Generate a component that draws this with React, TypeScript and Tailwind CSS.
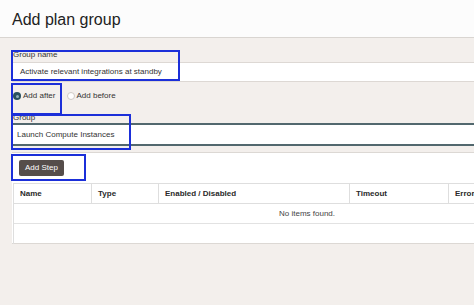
import React from 'react';

const font = { fontFamily: '"Liberation Sans", Arial, sans-serif' };

const columns = [
  { label: 'Name', width: 'w-[78px]' },
  { label: 'Type', width: 'w-[67px]' },
  { label: 'Enabled / Disabled', width: 'w-[191px]' },
  { label: 'Timeout', width: 'w-[99px]' },
  { label: 'Errors', width: 'w-[152px]' },
];

export default function App() {
  return (
    <div
      className="relative w-[474px] h-[305px] overflow-hidden bg-[#f3efec] text-[#2e2e2e]"
      style={font}
    >
      {/* Header */}
      <div className="h-[38px] bg-[#fcfcfc] border-b border-[#d9d5d1] pl-[12px] pt-[10px]">
        <h1 className="text-[16px] leading-[20px] font-normal text-[#222]">Add plan group</h1>
      </div>

      {/* Form */}
      <div className="pl-[12px]">
        <div className="mt-[12px] pl-[1px] text-[8px] leading-[10px] text-[#333]">Group name</div>
        <div className="mt-[2px] h-[20px] bg-white border-y border-l border-[#ddd8d4] pl-[7px] flex items-center text-[8px] text-[#333]">
          Activate relevant integrations at standby
        </div>

        <div className="mt-[8px] h-[12px] flex items-center text-[8px] text-[#333]">
          <div className="ml-[1px] w-[8px] h-[8px] rounded-full bg-[#27505f] flex items-center justify-center">
            <div className="w-[3px] h-[3px] rounded-full bg-[#8fb0bb]" />
          </div>
          <span className="ml-[2px]">Add after</span>
          <div className="ml-[12px] w-[8px] h-[8px] rounded-full bg-white border border-[#cfcac6]" />
          <span className="ml-[1px]">Add before</span>
        </div>

        <div className="mt-[11px] pl-[1px] text-[8px] leading-[10px] text-[#333]">Group</div>
        <div className="h-[23px] bg-white border-y-2 border-[#52686e] pl-[5px] flex items-center text-[8px] text-[#333]">
          Launch Compute Instances
        </div>

        {/* Steps panel */}
        <div className="mt-[6px] h-[92px] bg-white border-y border-[#dcd8d4]">
          <button className="ml-[7px] mt-[6px] w-[45px] h-[16px] rounded-[2px] bg-[#554d4a] text-white text-[8px] leading-[16px]">
            Add Step
          </button>
          <div className="mt-[6px] ml-[1px] w-[587px] border-l border-[#dedede]">
            <div className="flex h-[21px] border-y border-[#dedede]">
              {columns.map((c, i) => (
                <div
                  key={c.label}
                  className={`${c.width} shrink-0 flex items-center pl-[6px] text-[8px] font-bold text-[#2a2a2a] ${i < columns.length - 1 ? 'border-r border-[#dedede]' : ''}`}
                >
                  {c.label}
                </div>
              ))}
            </div>
            <div className="h-[20px] border-b border-[#e2e2e2] flex items-center justify-center text-[8px] text-[#444]">
              No items found.
            </div>
            <div className="h-[20px]" />
          </div>
        </div>
      </div>

      {/* Annotation boxes */}
      <div className="absolute left-[11px] top-[50px] w-[169px] h-[31px] border-2 border-[#1b2fd9]" />
      <div className="absolute left-[11px] top-[83px] w-[51px] h-[32px] border-2 border-[#1b2fd9]" />
      <div className="absolute left-[11px] top-[114px] w-[120px] h-[36px] border-2 border-[#1b2fd9]" />
      <div className="absolute left-[11px] top-[154px] w-[75px] h-[27px] border-2 border-[#1b2fd9]" />
    </div>
  );
}
